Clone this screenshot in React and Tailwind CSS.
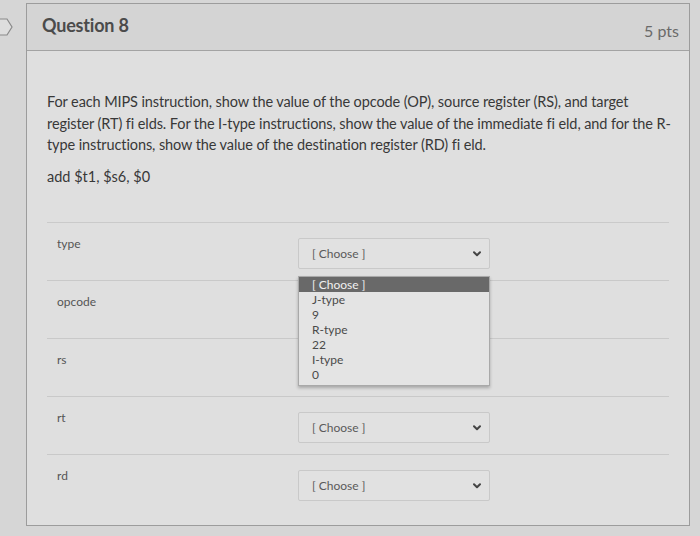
import { useState } from 'react'

const ROWS = ['type', 'opcode', 'rs', 'rt', 'rd']
const OPTIONS = ['[ Choose ]', 'J-type', '9', 'R-type', '22', 'I-type', '0']

function Chevron() {
  return (
    <svg width="8" height="6" viewBox="0 0 8 6" className="shrink-0">
      <path d="M1 1.2l3 3 3-3" fill="none" stroke="#444" strokeWidth="2" strokeLinecap="round" strokeLinejoin="round" />
    </svg>
  )
}

function SelectBox({ open }) {
  return (
    <div className="relative w-[192px]">
      <div className="h-[31px] flex items-center justify-between pl-[13px] pr-[8px] border border-[#c9c9c9] bg-[#e1e1e1] rounded-[2px]">
        <span className="text-[12px] text-[#5a5a5a]">[ Choose ]</span>
        <Chevron />
      </div>
      {open && (
        <div className="absolute left-0 top-[38px] w-[192px] z-10 bg-[#e4e4e4] border border-[#a9a9a9] shadow-[0_2px_3px_rgba(0,0,0,0.25)] pb-[3px]">
          {OPTIONS.map((opt, i) => (
            <div
              key={opt}
              className={
                i === 0
                  ? 'h-[15px] leading-[15px] pl-[13px] text-[12px] bg-[#696969] text-[#f0f0f0]'
                  : 'h-[15px] leading-[15px] pl-[13px] text-[12px] text-[#4a4a4a]'
              }
            >
              {opt}
            </div>
          ))}
        </div>
      )}
    </div>
  )
}

export default function App() {
  const [openRow] = useState('type')

  return (
    <div className="w-[700px] h-[536px] relative overflow-hidden bg-[#d6d6d6] font-['Lato','Open_Sans',sans-serif]">
      {/* collapse arrow on the left edge */}
      <svg className="absolute left-0 top-[17px]" width="14" height="20" viewBox="0 0 14 20">
        <path d="M-2 2h9l5 8-5 8h-9" fill="#dedede" stroke="#8a8a8a" strokeWidth="1.2" />
      </svg>

      <div className="ml-[26px] mr-[10px] mt-[3px] border border-[#9c9c9c] bg-[#dfdfdf]">
        {/* header */}
        <div className="h-[47px] flex items-start justify-between pl-[15px] pr-[10px] bg-[#d4d4d4] border-b border-[#a3a3a3]">
          <span className="mt-[8px] text-[18px] font-bold text-[#4b4b4b] tracking-[-0.2px]">Question 8</span>
          <span className="mt-[15px] text-[16px] text-[#6a6a6a]">5 pts</span>
        </div>

        {/* body */}
        <div className="pl-[20px] pr-[14px] pt-[40px] pb-[12px]">
          <p className="text-[14.5px] leading-[21.5px] text-[#383838] tracking-[-0.1px]">
            For each MIPS instruction, show the value of the opcode (OP), source register (RS), and target register (RT) fi elds. For the I-type instructions, show the value of the immediate fi eld, and for the R-type instructions, show the value of the destination register (RD) fi eld.
          </p>
          <p className="mt-[10px] text-[14.5px] leading-[21.5px] text-[#383838]">add $t1, $s6, $0</p>

          <div className="mt-[35px] mr-[6px] border-t border-[#cacaca]">
            {ROWS.map((row, i) => (
              <div
                key={row}
                className={
                  i < ROWS.length - 1
                    ? 'h-[58px] flex border-b border-[#c9c9c9]'
                    : 'h-[58px] flex'
                }
              >
                <div className="w-[251px] pl-[10px] pt-[12px] text-[12px] text-[#555]">{row}</div>
                <div className="pt-[15px]">
                  {(row === 'type' || row === 'rt' || row === 'rd') && <SelectBox open={openRow === row} />}
                </div>
              </div>
            ))}
          </div>
        </div>
      </div>
    </div>
  )
}
